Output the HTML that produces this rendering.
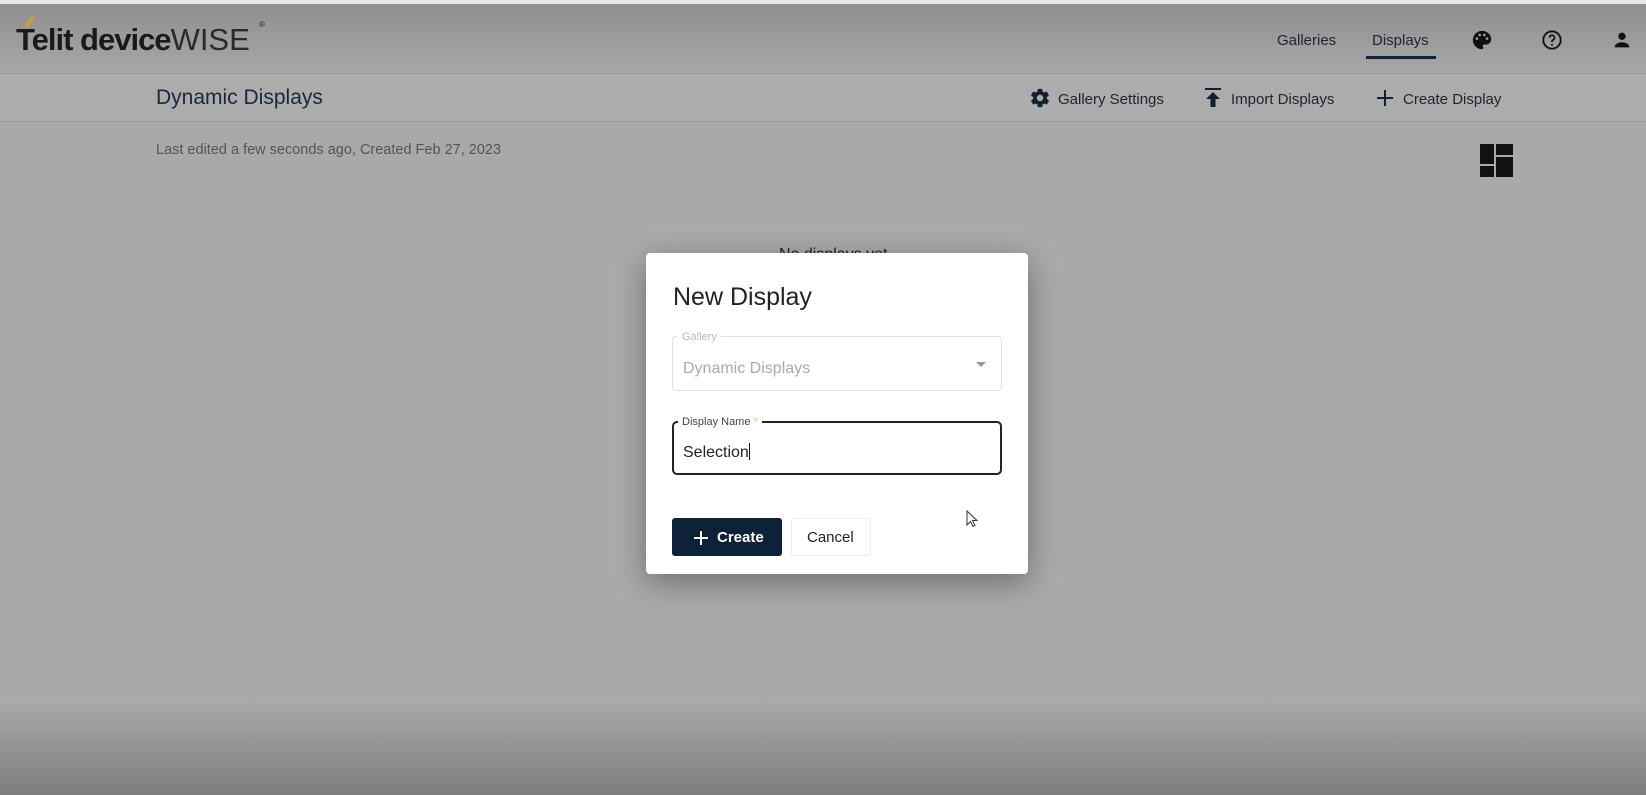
<!DOCTYPE html>
<html><head><meta charset="utf-8"><style>
*{margin:0;padding:0;box-sizing:border-box}
body{width:1646px;height:795px;overflow:hidden;position:relative;font-family:"Liberation Sans",sans-serif;background:#a9a9a9}
.abs{position:absolute}
#top{left:0;top:0;width:1646px;height:4px;background:#e6e6e6}
#hdr{left:0;top:4px;width:1646px;height:70px;background:linear-gradient(#8f8f8f,#a7a7a7);border-bottom:1px solid #999}
#sub{left:0;top:74px;width:1646px;height:48px;background:#acacac;border-bottom:1px solid #9d9d9d}
#bot{left:0;top:700px;width:1646px;height:95px;background:linear-gradient(#a9a9a9,#7d7d7d)}
.t{white-space:nowrap;color:#1c2530}
.nav{font-size:15px;top:32px}
.act{font-size:15px;top:91px}
#dlg{left:646px;top:253px;width:382px;height:321px;background:#fff;border-radius:4px;box-shadow:0 8px 30px rgba(0,0,0,.35)}
</style></head><body>
<div id="top" class="abs"></div>
<div id="hdr" class="abs"></div>
<div id="sub" class="abs"></div>
<div id="bot" class="abs"></div>

<div class="abs" style="left:28px;top:15px;width:3px;height:14px;background:#c9a227;transform:rotate(35deg)"></div>
<div class="abs t" style="left:16px;top:22px;font-size:31px;font-weight:bold;color:#1a1a1a;letter-spacing:-1px">Telit device<span style="font-weight:normal;letter-spacing:0;color:#2a2a2a">WISE</span></div>
<div class="abs" style="left:259px;top:20px;font-size:8px;color:#222">®</div>

<div class="abs t nav" style="left:1277px">Galleries</div>
<div class="abs t nav" style="left:1372px">Displays</div>
<div class="abs" style="left:1366px;top:56px;width:70px;height:3px;background:#15233a"></div>
<svg class="abs" style="left:1471px;top:29px" width="22" height="22" viewBox="0 0 24 24"><path fill="#111" d="M12 2C6.5 2 2 6.5 2 12s4.5 10 10 10c.9 0 1.5-.7 1.5-1.5 0-.4-.1-.7-.4-1-.2-.3-.4-.6-.4-1 0-.8.7-1.5 1.5-1.5H16c3.3 0 6-2.7 6-6 0-4.9-4.5-9-10-9zm-5.5 10c-.8 0-1.5-.7-1.5-1.5S5.7 9 6.5 9 8 9.7 8 10.5 7.3 12 6.5 12zm3-4C8.7 8 8 7.3 8 6.5S8.7 5 9.5 5s1.5.7 1.5 1.5S10.3 8 9.5 8zm5 0c-.8 0-1.5-.7-1.5-1.5S13.7 5 14.5 5s1.5.7 1.5 1.5S15.3 8 14.5 8zm3 4c-.8 0-1.5-.7-1.5-1.5S16.7 9 17.5 9s1.5.7 1.5 1.5-.7 1.5-1.5 1.5z"/></svg>
<svg class="abs" style="left:1541px;top:29px" width="22" height="22" viewBox="0 0 24 24"><circle cx="12" cy="12" r="9.5" fill="none" stroke="#111" stroke-width="2"/><path d="M9.3 9.5a2.7 2.7 0 1 1 3.7 2.5c-.7.3-1 .8-1 1.5v1" fill="none" stroke="#111" stroke-width="1.8"/><circle cx="12" cy="17.3" r="1.1" fill="#111"/></svg>
<svg class="abs" style="left:1611px;top:29px" width="22" height="22" viewBox="0 0 24 24"><circle cx="12" cy="8" r="4" fill="#111"/><path d="M4 20c0-3.5 4-5.5 8-5.5s8 2 8 5.5z" fill="#111"/></svg>

<div class="abs t" style="left:156px;top:86px;font-size:21px;color:#16283a">Dynamic Displays</div>
<svg class="abs" style="left:1029px;top:87px" width="22" height="22" viewBox="0 0 24 24"><path fill="#13202e" d="M19.4 13c.04-.3.06-.66.06-1s-.02-.7-.07-1l2.1-1.65c.2-.15.24-.42.12-.64l-2-3.46c-.12-.22-.39-.3-.61-.22l-2.5 1c-.52-.4-1.08-.73-1.690-.98l-.38-2.65A.49.49 0 0 0 14 2h-4c-.25 0-.46.18-.49.42l-.38 2.650c-.61.25-1.17.59-1.69.98l-2.5-1c-.23-.09-.49 0-.61.22l-2 3.46c-.13.22-.07.49.12.64L4.57 11c-.04.32-.07.66-.07 1s.02.68.07 1l-2.1 1.65c-.2.15-.25.42-.13.64l2 3.46c.12.22.39.3.61.22l2.5-1c.52.4 1.08.73 1.69.98l.38 2.65c.03.24.24.42.49.42h4c.25 0 .46-.18.49-.42l.38-2.65c.61-.25 1.17-.59 1.69-.98l2.5 1c.23.09.49 0 .61-.22l2-3.46c.12-.22.07-.49-.12-.64L19.4 13zM12 15.5a3.5 3.5 0 1 1 0-7 3.5 3.5 0 0 1 0 7z"/></svg>
<div class="abs t act" style="left:1058px">Gallery Settings</div>
<svg class="abs" style="left:1203px;top:87px" width="20" height="22" viewBox="0 0 20 22"><rect x="2" y="1" width="16" height="2" fill="#13202e"/><path d="M10 5l-7 7h4.5v8h5v-8H17z" fill="#13202e"/></svg>
<div class="abs t act" style="left:1231px">Import Displays</div>
<svg class="abs" style="left:1376px;top:89px" width="18" height="18" viewBox="0 0 18 18"><path d="M9 1v16M1 9h16" stroke="#13202e" stroke-width="2"/></svg>
<div class="abs t act" style="left:1403px">Create Display</div>

<div class="abs t" style="left:156px;top:142px;font-size:14.5px;color:#555">Last edited a few seconds ago, Created Feb 27, 2023</div>
<svg class="abs" style="left:1480px;top:144px" width="33" height="33" viewBox="0 0 33 33"><rect x="0" y="0" width="14" height="20" fill="#111"/><rect x="0" y="22" width="14" height="11" fill="#111"/><rect x="16" y="0" width="17" height="11" fill="#111"/><rect x="16" y="13" width="17" height="20" fill="#111"/></svg>
<div class="abs t" style="left:779px;top:246px;font-size:16px;color:#222">No displays yet</div>

<div id="dlg" class="abs">
 <div class="abs t" style="left:27px;top:30px;font-size:25px;color:#222">New Display</div>
 <div class="abs" style="left:26px;top:83px;width:330px;height:55px;border:1px solid #e2e2e2;border-radius:4px"></div>
 <div class="abs t" style="left:32px;top:78px;font-size:11px;color:#bbb;background:#fff;padding:0 4px">Gallery</div>
 <div class="abs t" style="left:37px;top:107px;font-size:16px;color:#aaa">Dynamic Displays</div>
 <div class="abs" style="left:330px;top:109px;border-left:5px solid transparent;border-right:5px solid transparent;border-top:5px solid #999"></div>
 <div class="abs" style="left:26px;top:168px;width:330px;height:54px;border:2px solid #1a2530;border-radius:5px"></div>
 <div class="abs t" style="left:32px;top:163px;font-size:11px;color:#444;background:#fff;padding:0 4px">Display Name <span style="color:#e8c55a">*</span></div>
 <div class="abs t" style="left:37px;top:190px;font-size:16px;color:#222">Selection<span style="display:inline-block;width:1px;height:17px;background:#111;vertical-align:-3px"></span></div>
 <div class="abs" style="left:26px;top:265px;width:110px;height:38px;background:#0d2238;border-radius:3px"></div>
 <svg class="abs" style="left:47px;top:277px" width="16" height="16" viewBox="0 0 16 16"><path d="M8 1v14M1 8h14" stroke="#fff" stroke-width="2"/></svg>
 <div class="abs t" style="left:71px;top:276px;font-size:15px;font-weight:bold;color:#fff">Create</div>
 <div class="abs" style="left:145px;top:265px;width:80px;height:38px;border:1px solid #ececec;border-radius:3px"></div>
 <div class="abs t" style="left:161px;top:276px;font-size:15px;color:#222">Cancel</div>
 <svg class="abs" style="left:320px;top:257px" width="12" height="18" viewBox="0 0 12 18"><path d="M1 1v14l3.5-3.5 2.5 5 2-1-2.5-5H11z" fill="#fff" stroke="#333" stroke-width="1"/></svg>
</div>
</body></html>
